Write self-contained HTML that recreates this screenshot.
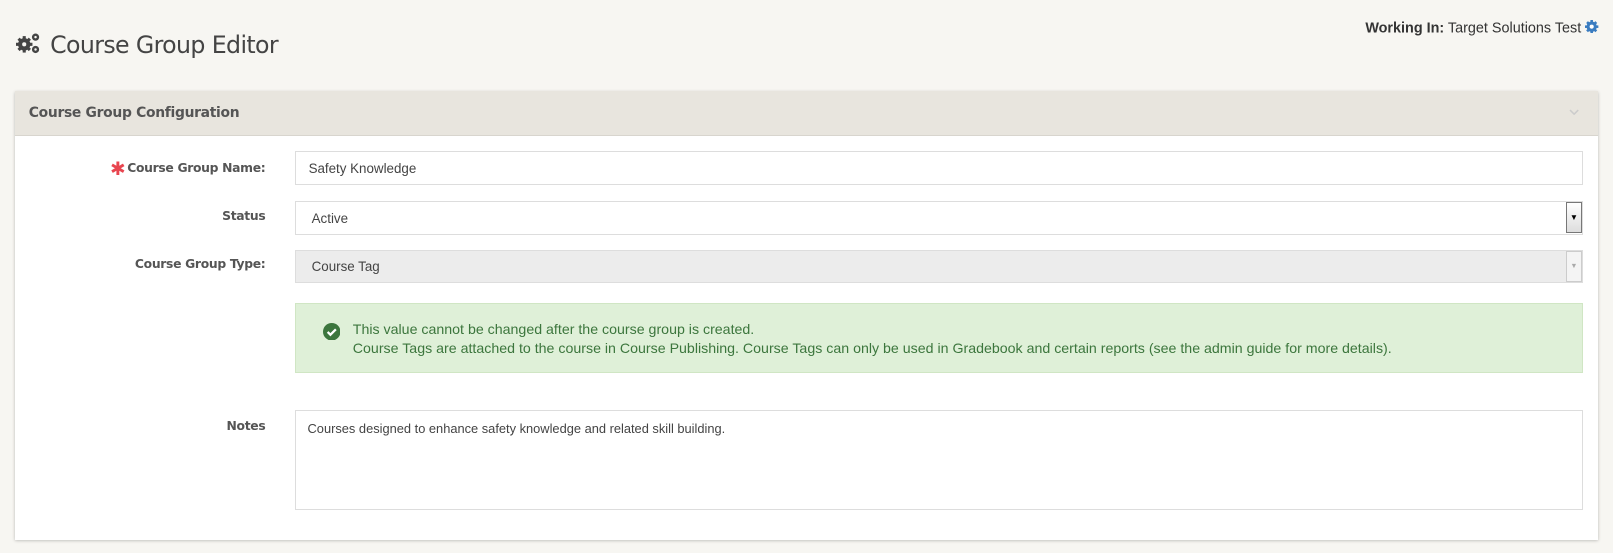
<!DOCTYPE html>
<html><head><style>
body{margin:0;background:#f7f6f2;font-family:"Liberation Sans",sans-serif;width:1613px;height:553px;overflow:hidden;color:#555}
#w{zoom:1.0287;width:1568px;height:538px;position:relative}
.abs{position:absolute}
h1{position:absolute;left:16px;top:30px;margin:0;font-weight:normal;font-size:23px;color:#444;font-family:"DejaVu Sans","Liberation Sans",sans-serif;letter-spacing:-0.6px}
.panel{left:15px;top:88px;width:1538px;height:437px;background:#fff;box-shadow:0 1px 3px rgba(0,0,0,.25)}
.ph{left:0;top:0;width:1538px;height:43px;background:#e8e5de;border-bottom:1px solid #d8d5ce}
.lbl{font-family:"DejaVu Sans",sans-serif;font-weight:bold;font-size:12px;letter-spacing:-0.3px;color:#555;text-align:right;width:243px;left:0}
.in{left:272px;width:1252px;border:1px solid #ddd;background:#fff;font-size:13px;color:#444;box-sizing:border-box}
</style></head><body><div id="w">
<h1><svg width="26" height="22" viewBox="0 0 26 22" style="vertical-align:-2px"><g fill="#444"><circle cx="8" cy="12" r="6"/><g stroke="#444" stroke-width="3"><line x1="8" y1="4" x2="8" y2="20"/><line x1="0" y1="12" x2="16" y2="12"/><line x1="2.5" y1="6.5" x2="13.5" y2="17.5"/><line x1="13.5" y1="6.5" x2="2.5" y2="17.5"/></g><circle cx="8" cy="12" r="2" fill="#f7f6f2"/><circle cx="19" cy="5" r="3.5"/><circle cx="19" cy="17" r="3.5"/></g><circle cx="19" cy="5" r="1.2" fill="#f7f6f2"/><circle cx="19" cy="17" r="1.2" fill="#f7f6f2"/></svg> Course Group Editor</h1>
<div class="abs" style="right:14px;top:19px;font-size:14px;color:#333;white-space:nowrap"><b>Working In:</b> Target Solutions Test <svg width="13" height="13" viewBox="0 0 13 13" style="vertical-align:-1px"><circle cx="6.5" cy="6.5" r="5" fill="#3a7cc0"/><g stroke="#3a7cc0" stroke-width="2.5"><line x1="6.5" y1="0" x2="6.5" y2="13"/><line x1="0" y1="6.5" x2="13" y2="6.5"/><line x1="2" y1="2" x2="11" y2="11"/><line x1="11" y1="2" x2="2" y2="11"/></g><circle cx="6.5" cy="6.5" r="2" fill="#fff"/></svg></div>
<div class="abs panel">
 <div class="abs ph"></div>
 <div class="abs" style="left:13px;top:14px;font-family:'DejaVu Sans',sans-serif;font-weight:bold;font-size:13.5px;letter-spacing:-0.3px;color:#555">Course Group Configuration</div>
 <svg class="abs" style="left:1510px;top:18px" width="10" height="6" viewBox="0 0 10 6"><path d="M1 1l4 4 4-4" stroke="#ccc" stroke-width="1.5" fill="none"/></svg>
 <div class="abs lbl" style="top:67px"><span style="color:#e8454f;font-size:18px;vertical-align:-3px;margin-right:2px">&#10033;</span>Course Group Name:</div>
 <div class="abs in" style="top:59px;height:33px;padding:9px 12px">Safety Knowledge</div>
 <div class="abs lbl" style="top:115px">Status</div>
 <div class="abs in" style="top:107px;height:33px;padding:9px 15px">Active</div>
 <div class="abs" style="left:1507px;top:108px;width:16px;height:31px;border:1px solid #777;background:linear-gradient(#fff,#ddd);box-sizing:border-box;font-size:8px;text-align:center;line-height:29px;color:#000">&#9660;</div>
 <div class="abs lbl" style="top:162px">Course Group Type:</div>
 <div class="abs in" style="top:155px;height:32px;padding:8px 15px;background:#ececec">Course Tag</div>
 <div class="abs" style="left:1507px;top:156px;width:16px;height:30px;border:1px solid #ccc;background:#f4f4f4;box-sizing:border-box;font-size:7px;text-align:center;line-height:28px;color:#aaa">&#9660;</div>
 <div class="abs" style="left:272px;top:207px;width:1252px;height:68px;background:#dff0d8;border:1px solid #d0e6c4;box-sizing:border-box;color:#3c763d;font-size:13.8px;line-height:19px;padding:16px 0 0 55px">
  <svg class="abs" style="left:26px;top:18px" width="17" height="17" viewBox="0 0 17 17"><circle cx="8.5" cy="8.5" r="8.5" fill="#3c763d"/><path d="M4.5 8.7l2.7 2.7 5.3-5.3" stroke="#fff" stroke-width="2.2" fill="none"/></svg>
  This value cannot be changed after the course group is created.<br>Course Tags are attached to the course in Course Publishing. Course Tags can only be used in Gradebook and certain reports (see the admin guide for more details).</div>
 <div class="abs lbl" style="top:319px">Notes</div>
 <div class="abs in" style="top:311px;height:97px;padding:9px 11px;font-size:12.5px">Courses designed to enhance safety knowledge and related skill building.</div>
</div>
</div></body></html>
